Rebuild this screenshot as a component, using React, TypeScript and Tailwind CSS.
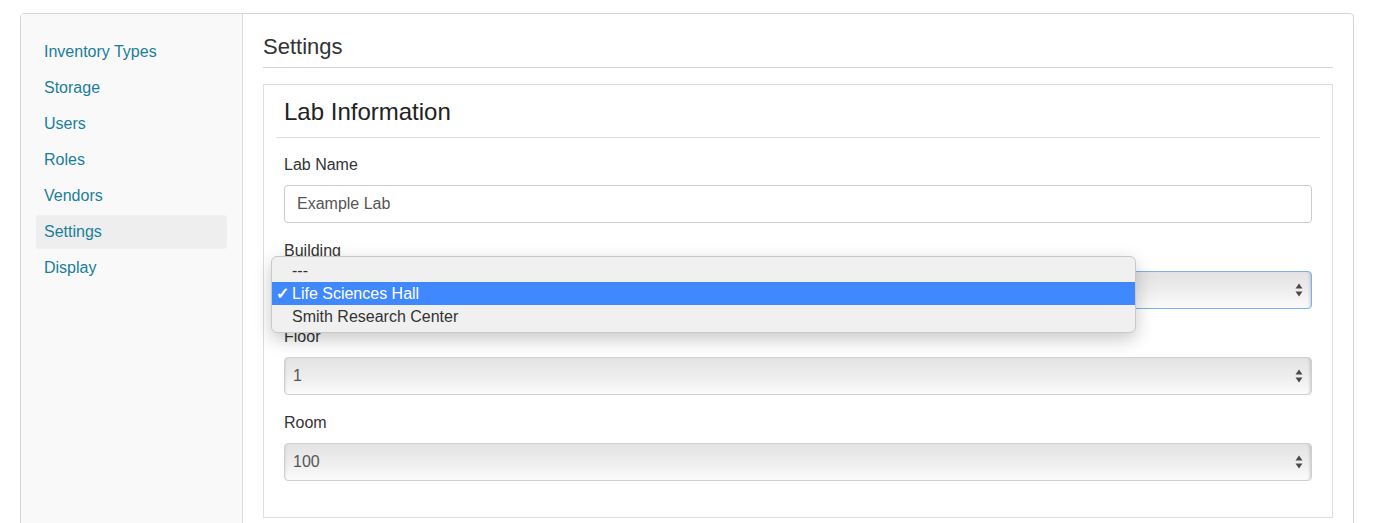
import React from 'react'

const NAV = ['Inventory Types', 'Storage', 'Users', 'Roles', 'Vendors', 'Settings', 'Display']

function SelectArrows() {
  return (
    <svg width="8" height="14" viewBox="0 0 8 14" className="shrink-0">
      <path d="M4 0.5 L7.5 5.5 L0.5 5.5 Z" fill="#4a4a4a" />
      <path d="M4 13.5 L7.5 8.5 L0.5 8.5 Z" fill="#4a4a4a" />
    </svg>
  )
}

function FakeSelect({ value, focused }: { value: string; focused?: boolean }) {
  return (
    <div
      className={
        'flex h-[38px] w-full items-center justify-between rounded-[4px] border pl-[8px] pr-[8px] text-[16px] text-[#555] bg-[linear-gradient(180deg,#e3e3e3_0%,#ececec_45%,#fbfbfb_100%)] shadow-[inset_-3px_0_3px_-2px_rgba(0,0,0,0.18),inset_2px_0_2px_-1px_rgba(0,0,0,0.08)] ' +
        (focused ? 'border-[#7ab1f3]' : 'border-[#cdd0d5]')
      }
    >
      <span>{value}</span>
      <SelectArrows />
    </div>
  )
}

function Field({ label, children }: { label: string; children: React.ReactNode }) {
  return (
    <div className="relative mb-[18px]">
      <div className="mb-[10px] h-5 text-[16px] leading-5 text-[#333]">{label}</div>
      {children}
    </div>
  )
}

export default function App() {
  return (
    <div
      className="min-h-[523px] bg-white pl-5 pt-[13px]"
      style={{ fontFamily: '"Liberation Sans", Arial, sans-serif' }}
    >
      <div className="flex min-h-[530px] w-[1334px] rounded-t-[4px] border border-[#d4d4d4]">
        {/* ── Sidebar ── */}
        <aside className="w-[222px] shrink-0 border-r border-[#dcdcdc] bg-[#f9f9f9] px-[15px] pt-[21px]">
          <nav className="flex flex-col gap-[2px]">
            {NAV.map((item) => (
              <a
                key={item}
                href="#"
                className={
                  'flex h-[34px] items-center rounded-[4px] pl-2 text-[16px] text-[#1a7e9b] ' +
                  (item === 'Settings' ? 'bg-[#eeeeee]' : '')
                }
              >
                {item}
              </a>
            ))}
          </nav>
        </aside>

        {/* ── Main ── */}
        <main className="flex-1 px-5 pt-[19px]">
          <h2 className="border-b border-[#d2d2d2] pb-[6px] text-[22px] font-medium leading-[28px] text-[#333]">
            Settings
          </h2>

          <section className="mt-4 border border-[#dedede] px-3 pt-3 pb-[18px]">
            <h3 className="border-b border-[#dedede] px-2 pb-[10px] text-[24px] font-medium leading-[30px] text-[#222]">
              Lab Information
            </h3>

            <div className="px-2 pt-[17px]">
              <Field label="Lab Name">
                <div className="flex h-[38px] items-center rounded-[4px] border border-[#cccccc] bg-white px-3 text-[16px] text-[#555]">
                  Example Lab
                </div>
              </Field>

              <Field label="Building">
                <FakeSelect value="Life Sciences Hall" focused />

                {/* open native menu */}
                <div className="absolute left-[-13px] top-[15px] z-10 w-[865px] rounded-[6px] border border-[#c9c9c9] bg-[#f0f0f0] pt-[2px] pb-[4px] text-[16px] text-[#333] shadow-[0_6px_18px_rgba(0,0,0,0.22)]">
                  <div className="flex h-[23px] items-center pl-5">---</div>
                  <div className="relative flex h-[23px] items-center bg-[#3f88fd] pl-5 text-white">
                    <span className="absolute left-[4px] font-bold">✓</span>
                    Life Sciences Hall
                  </div>
                  <div className="flex h-[23px] items-center pl-5">Smith Research Center</div>
                </div>
              </Field>

              <Field label="Floor">
                <FakeSelect value="1" />
              </Field>

              <Field label="Room">
                <FakeSelect value="100" />
              </Field>
            </div>
          </section>
        </main>
      </div>
    </div>
  )
}
